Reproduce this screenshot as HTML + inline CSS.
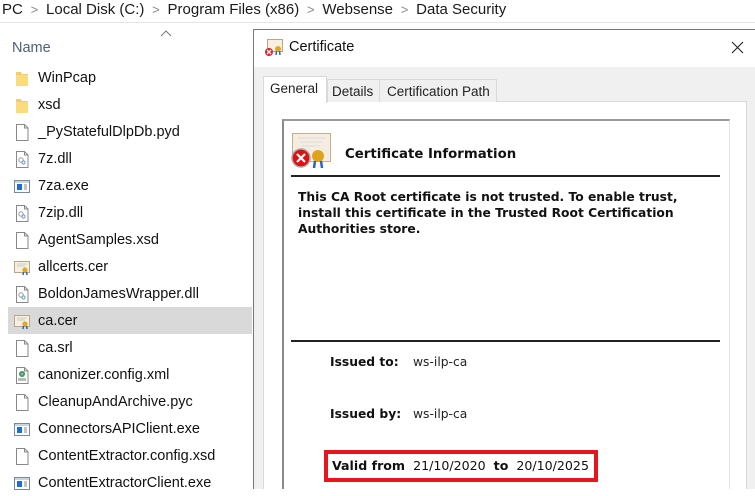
<!DOCTYPE html>
<html><head><meta charset="utf-8"><style>
*{margin:0;padding:0;box-sizing:border-box}
body{width:755px;height:489px;overflow:hidden;background:#fff;position:relative;font-family:"Liberation Sans",sans-serif;color:#000}
.a{position:absolute;white-space:nowrap}
.bc{font-size:15px;top:0;color:#1a1a1a}
.sep{color:#888;font-size:13px}
.row{position:absolute;left:8px;width:244px;height:27px}
.row span{position:absolute;left:30px;top:6px;font-size:14.5px;color:#111}
.row svg{position:absolute;left:6px;top:6px}
.b{font-family:"DejaVu Sans","Liberation Sans",sans-serif;font-weight:bold;font-size:12.3px;color:#111}
.n{font-family:"DejaVu Sans","Liberation Sans",sans-serif;font-size:12.3px;color:#222}
</style></head><body>
<svg width="0" height="0" style="position:absolute">
<defs>
<g id="fold"><path d="M2 2h5l1 2h6v12H2z" fill="#f3cf6a"/><path d="M2 5h12v11H2z" fill="#fadc7e"/></g>
<g id="doc"><path d="M2.5 .5h8l3.5 3.5v12.5h-11.5z" fill="#fff" stroke="#888"/><path d="M10.5 .5v3.5h3.5" fill="none" stroke="#888"/></g>
<g id="dll"><use href="#doc"/><circle cx="7" cy="9" r="2.2" fill="none" stroke="#999"/><circle cx="9.5" cy="11.5" r="1.6" fill="none" stroke="#6a9ad0"/></g>
<g id="exe"><rect x=".5" y="2.5" width="15" height="12" fill="#fff" stroke="#7a8a9a"/><rect x="1" y="3" width="14" height="2" fill="#c8d4e0"/><rect x="3" y="6" width="5" height="6" fill="#1a6fd0"/><path d="M10 7h3M10 9h3M10 11h3" stroke="#888"/></g>
<g id="cer"><rect x=".5" y="2.5" width="15" height="11" fill="#f6efe2" stroke="#b9a689"/><path d="M3 5h10M3 7h8" stroke="#ccc"/><circle cx="11" cy="11" r="2.6" fill="#e3a91c"/><path d="M9.5 13l-.5 3M12.5 13l.5 3" stroke="#2a62c9" stroke-width="1.5"/></g>
<g id="xml"><use href="#doc"/><circle cx="8" cy="7" r="3" fill="#3a9a3a"/><circle cx="8" cy="7" r="1.5" fill="#6ab0e8"/><rect x="4" y="11" width="8" height="3" fill="#bbb"/></g>
</defs></svg>

<div class="a bc" style="left:2px;top:1px">PC <span class="sep">&nbsp;&gt;&nbsp;</span> Local Disk (C:) <span class="sep">&nbsp;&gt;&nbsp;</span> Program Files (x86) <span class="sep">&nbsp;&gt;&nbsp;</span> Websense <span class="sep">&nbsp;&gt;&nbsp;</span> Data Security</div>
<div class="a" style="left:0;top:22px;width:755px;height:1px;background:#e5e5e5"></div>
<div class="a" style="left:12px;top:40px;font-size:14.5px;color:#4c607a">Name</div>
<svg class="a" style="left:160px;top:30px" width="12" height="8"><path d="M1 6l5-5 5 5" fill="none" stroke="#777"/></svg>

<div class="row" style="top:64px"><svg width="16" height="17"><use href="#fold"/></svg><span>WinPcap</span></div>
<div class="row" style="top:91px"><svg width="16" height="17"><use href="#fold"/></svg><span>xsd</span></div>
<div class="row" style="top:118px"><svg width="16" height="17"><use href="#doc"/></svg><span>_PyStatefulDlpDb.pyd</span></div>
<div class="row" style="top:145px"><svg width="16" height="17"><use href="#dll"/></svg><span>7z.dll</span></div>
<div class="row" style="top:172px"><svg width="16" height="17"><use href="#exe"/></svg><span>7za.exe</span></div>
<div class="row" style="top:199px"><svg width="16" height="17"><use href="#dll"/></svg><span>7zip.dll</span></div>
<div class="row" style="top:226px"><svg width="16" height="17"><use href="#doc"/></svg><span>AgentSamples.xsd</span></div>
<div class="row" style="top:253px"><svg width="16" height="17"><use href="#cer"/></svg><span>allcerts.cer</span></div>
<div class="row" style="top:280px"><svg width="16" height="17"><use href="#dll"/></svg><span>BoldonJamesWrapper.dll</span></div>
<div class="row" style="top:307px;background:#d9d9d9"><svg width="16" height="17"><use href="#cer"/></svg><span>ca.cer</span></div>
<div class="row" style="top:334px"><svg width="16" height="17"><use href="#doc"/></svg><span>ca.srl</span></div>
<div class="row" style="top:361px"><svg width="16" height="17"><use href="#xml"/></svg><span>canonizer.config.xml</span></div>
<div class="row" style="top:388px"><svg width="16" height="17"><use href="#doc"/></svg><span>CleanupAndArchive.pyc</span></div>
<div class="row" style="top:415px"><svg width="16" height="17"><use href="#exe"/></svg><span>ConnectorsAPIClient.exe</span></div>
<div class="row" style="top:442px"><svg width="16" height="17"><use href="#doc"/></svg><span>ContentExtractor.config.xsd</span></div>
<div class="row" style="top:469px"><svg width="16" height="17"><use href="#exe"/></svg><span>ContentExtractorClient.exe</span></div>

<div class="a" style="left:253px;top:29px;width:502px;height:460px;background:#f0f0f0;border-left:1px solid #777;border-top:1px solid #777"></div>
<div class="a" style="left:254px;top:30px;width:501px;height:37px;background:#fff"></div>
<svg class="a" style="left:264px;top:37px" width="20" height="20"><rect x="3.5" y="2.5" width="15" height="12" fill="#f6efe2" stroke="#b9a689"/><circle cx="5" cy="15" r="4" fill="#d22"/><path d="M3 13l4 4M7 13l-4 4" stroke="#fff" stroke-width="1.3"/><circle cx="14" cy="12" r="3" fill="#e3a91c"/><path d="M12.5 14l-.5 4M15.5 14l.5 4" stroke="#2a62c9" stroke-width="1.5"/></svg>
<div class="a" style="left:289px;top:39px;font-size:14.5px;color:#111">Certificate</div>
<svg class="a" style="left:731px;top:41px" width="13" height="13"><path d="M1 1l11 11M12 1L1 12" stroke="#222" stroke-width="1.1"/></svg>

<div class="a" style="left:263px;top:101px;width:484px;height:388px;background:#fff;border:1px solid #d9d9d9;border-bottom:none"></div>
<div class="a" style="left:327px;top:79px;width:53px;height:23px;background:#f0f0f0;border:1px solid #d9d9d9;border-bottom:none"></div>
<div class="a" style="left:379px;top:79px;width:118px;height:23px;background:#f0f0f0;border:1px solid #d9d9d9;border-bottom:none"></div>
<div class="a" style="left:263px;top:76px;width:64px;height:27px;background:#fff;border:1px solid #d9d9d9;border-bottom:none"></div>
<div class="a" style="left:270px;top:81px;font-size:13.5px;color:#222">General</div>
<div class="a" style="left:332px;top:84px;font-size:13.5px;color:#222">Details</div>
<div class="a" style="left:387px;top:84px;font-size:13.5px;color:#222">Certification Path</div>

<div class="a" style="left:282px;top:119px;width:448px;height:370px;border-left:2px solid #8a8a8a;border-top:2px solid #9a9a9a;border-right:1px solid #e3e3e3"></div>
<svg class="a" style="left:290px;top:131px" width="44" height="40"><rect x="2.5" y="2.5" width="38" height="28" fill="#f5eee0" stroke="#c4b090"/><path d="M8 7h27M10 11h22M12 15h18" stroke="#d8d8e0"/><circle cx="11" cy="27" r="9" fill="#d11" stroke="#aaa" stroke-width="1.5"/><path d="M7 23l8 8M15 23l-8 8" stroke="#fff" stroke-width="2.2"/><circle cx="28" cy="25" r="6" fill="#e0a41a"/><path d="M25 30l-1 7M31 30l1 7" stroke="#2a62c9" stroke-width="2.5"/></svg>
<div class="a b" style="left:345px;top:147px;font-size:13.3px">Certificate Information</div>
<div class="a" style="left:291px;top:175px;width:429px;height:2px;background:#222"></div>
<div class="a b" style="left:298px;top:189px;line-height:16px">This CA Root certificate is not trusted. To enable trust,<br>install this certificate in the Trusted Root Certification<br>Authorities store.</div>
<div class="a" style="left:291px;top:340px;width:429px;height:2px;background:#222"></div>
<div class="a b" style="left:330px;top:355px">Issued to:</div>
<div class="a n" style="left:413px;top:355px">ws-ilp-ca</div>
<div class="a b" style="left:330px;top:407px">Issued by:</div>
<div class="a n" style="left:413px;top:407px">ws-ilp-ca</div>
<div class="a" style="left:324px;top:450px;width:274px;height:32px;border:4px solid #e8141e"></div>
<div class="a" style="left:332px;top:458px;font-family:'DejaVu Sans','Liberation Sans',sans-serif;font-size:12.6px;color:#111"><b>Valid from</b>&nbsp; 21/10/2020&nbsp; <b>to</b>&nbsp; 20/10/2025</div>
</body></html>
